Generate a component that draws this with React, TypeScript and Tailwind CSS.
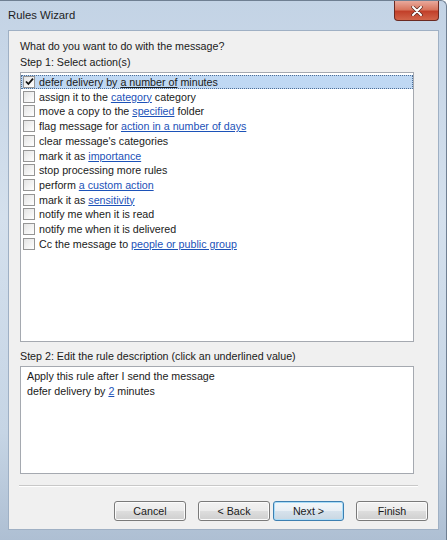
import type { ReactNode } from "react";

const Link = ({ children }: { children: ReactNode }) => (
  <span className="text-[#1c52b8] underline underline-offset-[1px]">{children}</span>
);

const actions: ReactNode[] = [
  <>
    defer delivery by <span className="underline underline-offset-[1px]">a number of</span> minutes
  </>,
  <>
    assign it to the <Link>category</Link> category
  </>,
  <>
    move a copy to the <Link>specified</Link> folder
  </>,
  <>
    flag message for <Link>action in a number of days</Link>
  </>,
  <>clear message's categories</>,
  <>
    mark it as <Link>importance</Link>
  </>,
  <>stop processing more rules</>,
  <>
    perform <Link>a custom action</Link>
  </>,
  <>
    mark it as <Link>sensitivity</Link>
  </>,
  <>notify me when it is read</>,
  <>notify me when it is delivered</>,
  <>
    Cc the message to <Link>people or public group</Link>
  </>,
];

function CheckBox({ checked }: { checked: boolean }) {
  return (
    <span className="w-[12px] h-[12px] shrink-0 border border-[#959595] bg-[linear-gradient(135deg,#e4e4e4,#ffffff)] flex items-center justify-center">
      {checked && (
        <svg width="9" height="9" viewBox="0 0 9 9">
          <path d="M1 4.5 L3.4 7 L8 1.6" fill="none" stroke="#111" strokeWidth="1.8" />
        </svg>
      )}
    </span>
  );
}

function WizButton({ label, focused }: { label: string; focused?: boolean }) {
  return (
    <button
      className={
        focused
          ? "w-[71px] h-[20px] rounded-[3px] border border-[#3c7fb1] bg-[linear-gradient(to_bottom,#f3f7fa_0%,#e8eff5_48%,#d6e2ec_52%,#c9d7e2_100%)] shadow-[inset_0_0_0_1px_#a9dcf8] text-[10.7px] text-[#1a1a1a]"
          : "w-[72px] h-[20px] rounded-[3px] border border-[#7a7a7a] bg-[linear-gradient(to_bottom,#f2f2f2_0%,#ebebeb_48%,#dddddd_52%,#cfcfcf_100%)] shadow-[inset_0_0_0_1px_#fbfbfb] text-[10.7px] text-[#1a1a1a]"
      }
    >
      {label}
    </button>
  );
}

export default function App() {
  return (
    <div className="w-[447px] h-[540px] overflow-hidden rounded-tr-[6px] border-r border-t border-[#6f7f92] bg-[linear-gradient(to_bottom,#c3d3e5,#d4e0ed_40%,#c6d5e5_80%,#aebfd3)] flex flex-col font-['Liberation_Sans',Arial,sans-serif]">
      <div className="h-[29px] shrink-0 flex items-start justify-between pl-[8px] pr-[7px]">
        <div className="pt-[6px] text-[11.3px] text-[#1e1e1e]">Rules Wizard</div>
        <div className="w-[45px] h-[20px] rounded-b-[4px] border border-t-0 border-[#6b2a22] bg-[linear-gradient(to_bottom,#e9a99c_0%,#d8765f_45%,#c2402a_55%,#d2654a_100%)] flex items-center justify-center">
          <svg width="12" height="10" viewBox="0 0 12 10">
            <path d="M2 1 L10 9 M10 1 L2 9" stroke="#5a2a22" strokeWidth="3.4" strokeLinecap="round" />
            <path d="M2 1 L10 9 M10 1 L2 9" stroke="#ffffff" strokeWidth="2" strokeLinecap="round" />
          </svg>
        </div>
      </div>

      <div className="ml-[8px] w-[431px] h-[500px] shrink-0 border border-[#9fb0c4] bg-[#f0f0f0] text-[10.7px] text-[#1a1a1a] flex flex-col pl-[11px]">
        <div className="mt-[8px] leading-[15px]">What do you want to do with the message?</div>
        <div className="mt-[1px] leading-[15px]">Step 1: Select action(s)</div>

        <div className="mt-[2px] w-[394px] h-[270px] border border-[#a5a9b0] bg-white pt-[1.6px] flex flex-col">
          {actions.map((a, i) => (
            <div
              key={i}
              className={
                i === 0
                  ? "h-[14.73px] flex items-center pl-[1px] border border-dotted border-[#4d6f99] bg-[#bfd8f3]"
                  : "h-[14.73px] flex items-center pl-[2px]"
              }
            >
              <CheckBox checked={i === 0} />
              <span className="ml-[4px] leading-[14px] whitespace-nowrap">{a}</span>
            </div>
          ))}
        </div>

        <div className="mt-[7px] leading-[15px]">Step 2: Edit the rule description (click an underlined value)</div>
        <div className="mt-[2px] w-[394px] h-[108px] border border-[#a5a9b0] bg-white pt-[2px] pl-[6px] leading-[15px]">
          <div>Apply this rule after I send the message</div>
          <div>
            defer delivery by <Link>2</Link> minutes
          </div>
        </div>

        <div className="mt-[11px] -ml-[1px] w-[399px] border-t border-[#c8c8c8] border-b border-b-white" />

        <div className="mt-[14px] flex pl-[94px]">
          <WizButton label="Cancel" />
          <div className="ml-[12px]">
            <WizButton label="< Back" />
          </div>
          <div className="ml-[3px]">
            <WizButton label="Next >" focused />
          </div>
          <div className="ml-[12px]">
            <WizButton label="Finish" />
          </div>
        </div>
      </div>
    </div>
  );
}
